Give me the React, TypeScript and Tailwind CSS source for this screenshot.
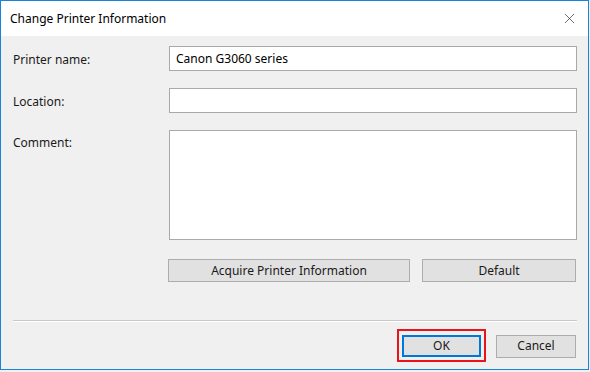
import { X } from 'lucide-react'

const font = { fontFamily: '"Segoe UI", "Noto Sans", "Liberation Sans", sans-serif' }

function Field({ label, value, tall }: { label: string; value?: string; tall?: boolean }) {
  return (
    <div className="flex items-start">
      <div className={`w-[156px] shrink-0 text-[12px] text-[#1a1a1a] ${tall ? 'pt-[4px]' : 'pt-[5px]'}`}>{label}</div>
      <div
        className={`flex-1 border border-[#a9a9a9] bg-white px-[6px] text-[12px] text-black ${tall ? 'h-[110px]' : 'h-[25px] leading-[23px]'}`}
      >
        {value}
      </div>
    </div>
  )
}

export default function App() {
  return (
    <div className="w-[590px] h-[372px] bg-[#f0f0f0] text-[#1a1a1a]" style={font}>
      <div className="flex flex-col w-[589px] h-[370px] border border-[#1883d7] bg-[#f0f0f0]">
        {/* Title bar */}
        <div className="flex h-[35px] items-center justify-between bg-white pl-[9px] pr-[10px]">
          <span className="text-[12px] text-black">Change Printer Information</span>
          <X size={17} strokeWidth={1} className="text-[#333]" />
        </div>

        {/* Body */}
        <div className="flex flex-col pl-[12px] pr-[11px] pt-[10px]">
          <div className="flex flex-col gap-[17px]">
            <Field label="Printer name:" value="Canon G3060 series" />
            <Field label="Location:" />
            <Field label="Comment:" tall />
          </div>

          <div className="mt-[19px] flex gap-[12px] pl-[155px] pr-[1px]">
            <button className="h-[23px] w-[242px] border border-[#adadad] bg-[#e1e1e1] text-[12px] text-[#1a1a1a]">
              Acquire Printer Information
            </button>
            <button className="h-[23px] flex-1 border border-[#adadad] bg-[#e1e1e1] text-[12px] text-[#1a1a1a]">
              Default
            </button>
          </div>

          <div className="mt-[38px] h-[2px] border-t border-[#c8c8c8] border-b-white border-b" />

          <div className="mt-[7px] flex items-center justify-end gap-[10px] pr-[1px]">
            <div className="border-2 border-[#e8141c] px-[3px] pt-[4px] pb-[3px]">
              <button className="block h-[22px] w-[79px] border-2 border-[#0078d7] bg-[#e1e1e1] text-[12px] text-[#1a1a1a]">
                OK
              </button>
            </div>
            <button className="mt-[1px] h-[23px] w-[80px] border border-[#adadad] bg-[#e1e1e1] text-[12px] text-[#1a1a1a]">
              Cancel
            </button>
          </div>
        </div>
      </div>
    </div>
  )
}
